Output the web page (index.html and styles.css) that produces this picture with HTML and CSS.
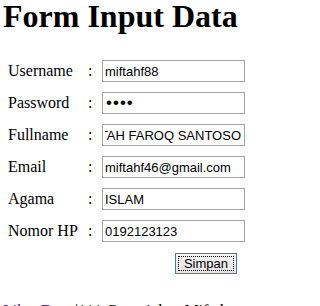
FILE: index.html
```html
<!DOCTYPE html>
<html>
<head>
<meta charset="utf-8">
<title>Form Input Data</title>
<link rel="stylesheet" href="styles.css">
</head>
<body>
<h1 class="title">Form Input Data</h1>
<form class="form">
  <div class="row"><label class="label">Username</label><span class="colon">:</span><input class="field" type="text" value="miftahf88"></div>
  <div class="row"><label class="label">Password</label><span class="colon">:</span><input class="field field-pass" type="password" value="abcd"></div>
  <div class="row"><label class="label">Fullname</label><span class="colon">:</span><input class="field field-end" type="text" value="MIFTAH FAROQ SANTOSO"></div>
  <div class="row"><label class="label">Email</label><span class="colon">:</span><input class="field" type="text" value="miftahf46@gmail.com"></div>
  <div class="row"><label class="label">Agama</label><span class="colon">:</span><input class="field" type="text" value="ISLAM"></div>
  <div class="row"><label class="label">Nomor HP</label><span class="colon">:</span><input class="field" type="text" value="0192123123"></div>
  <div class="actions"><button class="btn" type="button"><span class="btn-focus">Simpan</span></button></div>
</form>
<p class="footer"><a class="link" href="#">Lihat Data</a> |*** Copyright - Miftah Faroq Santoso ***</p>
</body>
</html>
```
FILE: styles.css
```css
html, body {
  margin: 0;
  background: #ffffff;
}
html {
  overflow: hidden;
}
body {
  width: 247px;
  padding: 0 3px;
  font-family: "Liberation Serif", "Times New Roman", serif;
  font-size: 16px;
  color: #000000;
}
.title {
  margin: 0;
  font-family: "Liberation Serif", "Times New Roman", serif;
  font-size: 32px;
  font-weight: bold;
  line-height: 32px;
}
.form {
  margin: 0;
  padding: 28px 0 0 5px;
  display: flex;
  flex-direction: column;
  gap: 10px;
}
.row {
  display: grid;
  grid-template-columns: 80px 14px 143px;
  align-items: center;
  height: 22px;
}
.label {
  font-size: 16px;
  white-space: nowrap;
}
.colon {
  font-size: 16px;
}
.field {
  box-sizing: border-box;
  width: 143px;
  height: 22px;
  margin: 0;
  padding: 0 2px;
  border: 1px solid #a6a6a6;
  border-radius: 0;
  font-family: "Liberation Sans", Arial, sans-serif;
  font-size: 13px;
  color: #000000;
  background: #ffffff;
  outline: none;
}
.field-pass {
  font-size: 17px;
  letter-spacing: 1px;
  padding-left: 3px;
}
.field-end {
  direction: rtl;
  padding-right: 3px;
}
.actions {
  margin-top: 1px;
  padding-left: 167px;
}
.btn {
  box-sizing: border-box;
  width: 62px;
  height: 21px;
  margin: 0;
  padding: 2px;
  border: 1px solid #3c7fb1;
  border-radius: 0;
  background: linear-gradient(#f4f4f4, #e4e4e4);
  font-family: "Liberation Sans", Arial, sans-serif;
  font-size: 13px;
  color: #000000;
  display: flex;
  align-items: stretch;
}
.btn-focus {
  flex: 1;
  border: 1px dotted #000000;
  display: flex;
  align-items: center;
  justify-content: center;
  line-height: 13px;
}
.footer {
  margin: 28px 0 0;
  font-size: 16px;
}
.link {
  color: #551a8b;
  text-decoration: underline;
}
```
